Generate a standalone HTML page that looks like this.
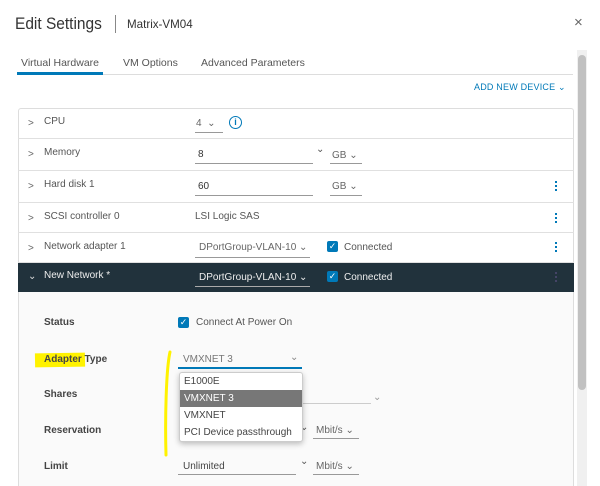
<!DOCTYPE html>
<html><head><style>
*{margin:0;padding:0;box-sizing:border-box}
body{width:600px;height:486px;overflow:hidden;background:#fff;font-family:"Liberation Sans",sans-serif;color:#333;position:relative;font-size:10px}
.a{position:absolute;white-space:nowrap}
.row{position:absolute;left:18px;width:556px;border-bottom:1px solid #e0e0e0}
.lbl{position:absolute;left:26px;color:#555;font-size:10px}
.chev{position:absolute;left:10px;color:#666;font-size:10px}
.ul{position:absolute;border-bottom:1px solid #999}
.dots{position:absolute;left:537px;width:3px}
.dots i{display:block;width:2px;height:2px;background:#0079b8;margin-bottom:2px}
.cb{position:absolute;width:11px;height:11px;background:#0079b8;border-radius:2px;color:#fff;font-size:9px;line-height:11px;text-align:center}
.bl{font-weight:bold;color:#444;font-size:10px}
</style></head><body>
<div class="a" style="left:15px;top:14px;font-size:17px;color:#333;transform:scaleX(0.91);transform-origin:left">Edit Settings</div>
<div class="a" style="left:115px;top:15px;width:1px;height:18px;background:#888"></div>
<div class="a" style="left:127px;top:18px;font-size:11.6px;color:#333">Matrix-VM04</div>
<div class="a" style="left:574px;top:14px;font-size:15px;color:#666">×</div>
<div class="a" style="left:21px;top:57px;font-size:10.5px;color:#555">Virtual Hardware</div>
<div class="a" style="left:123px;top:57px;font-size:10.5px;color:#555">VM Options</div>
<div class="a" style="left:201px;top:57px;font-size:10.5px;color:#555">Advanced Parameters</div>
<div class="a" style="left:17px;top:74px;width:556px;height:1px;background:#ddd"></div>
<div class="a" style="left:17px;top:72px;width:86px;height:3px;background:#0079b8"></div>
<div class="a" style="left:474px;top:82px;font-size:9px;color:#0079b8;letter-spacing:.2px">ADD NEW DEVICE ⌄</div>
<div class="a" style="left:577px;top:50px;width:10px;height:436px;background:#f0f0f0"></div>
<div class="a" style="left:578px;top:55px;width:8px;height:335px;background:#c1c1c1;border-radius:4px"></div>
<div class="a" style="left:18px;top:108px;width:556px;height:378px;border:1px solid #ddd;border-bottom:none;border-radius:3px 3px 0 0"></div>

<div class="row" style="top:108px;height:31px"><span class="chev" style="top:10px">&gt;</span><span class="lbl" style="top:8px">CPU</span>
<span class="a" style="left:178px;top:10px;color:#666">4 &nbsp;⌄</span><div class="ul" style="left:177px;top:24px;width:28px"></div>
<span class="a" style="left:211px;top:8px;width:13px;height:13px;border:1.5px solid #0079b8;border-radius:50%;color:#0079b8;font-size:9px;font-weight:bold;text-align:center;line-height:10px">i</span></div>
<div class="row" style="top:139px;height:32px"><span class="chev" style="top:10px">&gt;</span><span class="lbl" style="top:8px">Memory</span>
<span class="a" style="left:180px;top:10px">8</span><div class="ul" style="left:177px;top:24px;width:118px"></div>
<span class="a" style="left:298px;top:5px;color:#555">⌄</span><span class="a" style="left:314px;top:11px;color:#666">GB ⌄</span><div class="ul" style="left:312px;top:24px;width:32px"></div></div>
<div class="row" style="top:171px;height:32px"><span class="chev" style="top:10px">&gt;</span><span class="lbl" style="top:8px">Hard disk 1</span>
<span class="a" style="left:180px;top:10px">60</span><div class="ul" style="left:177px;top:24px;width:118px"></div>
<span class="a" style="left:314px;top:10px;color:#666">GB ⌄</span><div class="ul" style="left:312px;top:24px;width:32px"></div>
<div class="dots" style="top:10px"><i></i><i></i><i></i></div></div>
<div class="row" style="top:203px;height:30px"><span class="chev" style="top:10px">&gt;</span><span class="lbl" style="top:8px">SCSI controller 0</span>
<span class="a" style="left:177px;top:8px;color:#555">LSI Logic SAS</span><div class="dots" style="top:10px"><i></i><i></i><i></i></div></div>
<div class="row" style="top:233px;height:30px"><span class="chev" style="top:10px">&gt;</span><span class="lbl" style="top:8px">Network adapter 1</span>
<span class="a" style="left:181px;top:9px;color:#666">DPortGroup-VLAN-10 ⌄</span><div class="ul" style="left:177px;top:24px;width:115px"></div>
<div class="cb" style="left:309px;top:8px">✓</div><span class="a" style="left:326px;top:9px;color:#555">Connected</span>
<div class="dots" style="top:9px"><i></i><i></i><i></i></div></div>
<div class="row" style="top:263px;height:29px;background:#21323c;border:none"><span class="chev" style="top:8px;color:#ddd">⌄</span><span class="lbl" style="top:7px;color:#eee">New Network *</span>
<span class="a" style="left:181px;top:9px;color:#eee">DPortGroup-VLAN-10 ⌄</span><div class="ul" style="left:177px;top:23px;width:115px;border-color:#aaa"></div>
<div class="cb" style="left:309px;top:8px">✓</div><span class="a" style="left:326px;top:9px;color:#eee">Connected</span>
<div class="dots" style="top:9px"><i style="background:#446"></i><i style="background:#446"></i><i style="background:#446"></i></div></div>
<div class="a" style="left:19px;top:292px;width:554px;height:194px;background:#fafafa"></div>

<div class="a" style="left:35px;top:353px;width:50px;height:14px;background:#fff200;transform:rotate(-1deg)"></div>
<div class="a bl" style="left:44px;top:317px">Status</div>
<div class="cb" style="left:178px;top:317px">✓</div><span class="a" style="left:196px;top:317px;color:#555">Connect At Power On</span>
<div class="a bl" style="left:44px;top:354px">Adapter Type</div>
<span class="a" style="left:183px;top:354px;color:#777">VMXNET 3</span><span class="a" style="left:290px;top:352px;color:#888">⌄</span>
<div class="a" style="left:178px;top:367px;width:124px;height:1.5px;background:#0079b8"></div>
<div class="a bl" style="left:44px;top:389px">Shares</div>
<div class="a" style="left:300px;top:403px;width:71px;height:1px;background:#ccc"></div><span class="a" style="left:373px;top:392px;color:#999">⌄</span>
<div class="a bl" style="left:44px;top:425px">Reservation</div>
<span class="a" style="left:300px;top:422px;color:#555">⌄</span><span class="a" style="left:316px;top:425px;color:#666">Mbit/s ⌄</span><div class="ul" style="left:313px;top:438px;width:46px"></div>
<div class="a bl" style="left:44px;top:461px">Limit</div>
<span class="a" style="left:183px;top:461px;color:#444">Unlimited</span><div class="ul" style="left:178px;top:474px;width:118px"></div>
<span class="a" style="left:300px;top:456px;color:#555">⌄</span><span class="a" style="left:316px;top:461px;color:#666">Mbit/s ⌄</span><div class="ul" style="left:313px;top:474px;width:46px"></div>

<div class="a" style="left:179px;top:372px;width:124px;height:70px;background:#fff;border:1px solid #ccc;border-radius:3px;box-shadow:0 2px 6px rgba(0,0,0,.25);overflow:hidden">
<div style="height:17px;padding:3px 4px;color:#444">E1000E</div>
<div style="height:17px;padding:3px 4px;color:#fff;background:#777">VMXNET 3</div>
<div style="height:17px;padding:3px 4px;color:#444">VMXNET</div>
<div style="height:17px;padding:3px 4px;color:#444">PCI Device passthrough</div>
</div>
<svg class="a" style="left:0;top:0" width="600" height="486"><path d="M170 352 C166 370 165 420 166 455" stroke="#fff200" stroke-width="3" fill="none" stroke-linecap="round"/></svg>
</body></html>
